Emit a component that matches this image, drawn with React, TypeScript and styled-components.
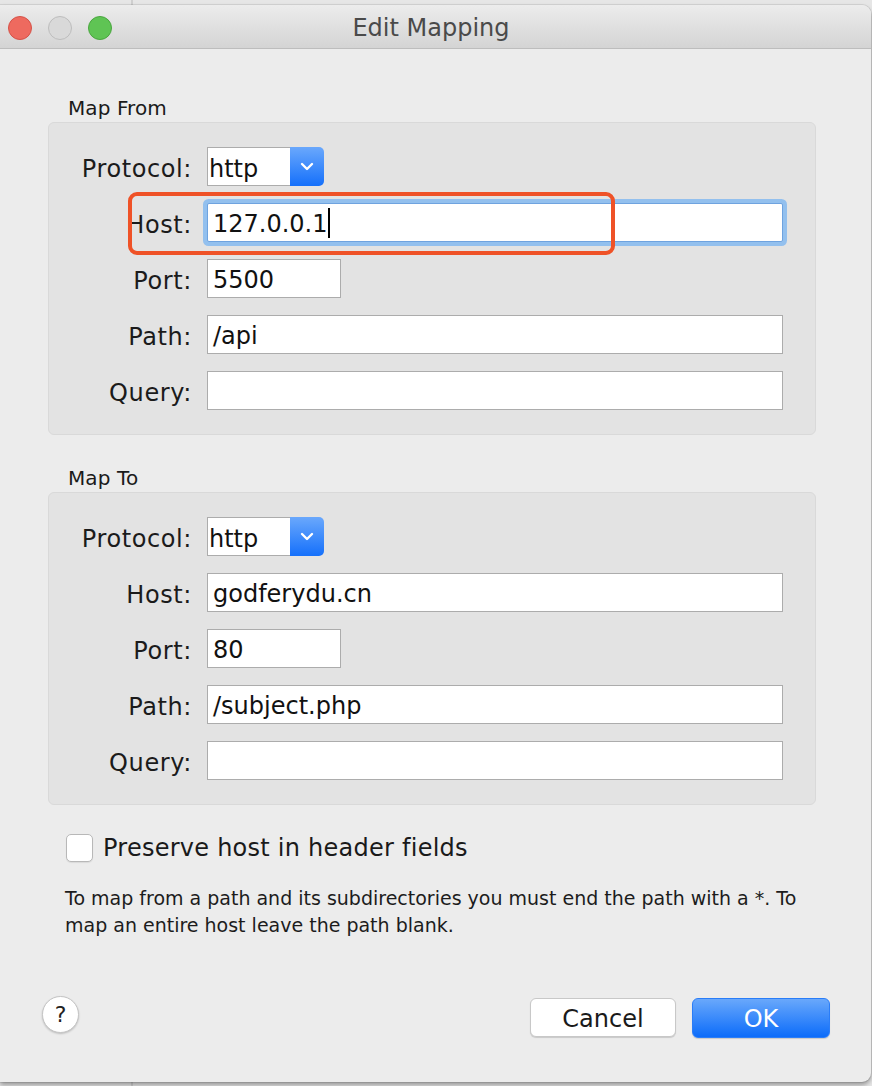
import React from "react";
import styled, { createGlobalStyle } from "styled-components";

const GlobalStyle = createGlobalStyle`
  html, body {
    margin: 0;
    padding: 0;
    background: #d6d6d6;
    font-family: "DejaVu Sans", "Liberation Sans", sans-serif;
    color: #1b1b1b;
  }
`;

const Desk = styled.div`
  width: 872px;
  height: 1086px;
  overflow: hidden;
  background: linear-gradient(90deg, #e6e6e6 0 131px, #cfcfcf 131px 133px, #e6e6e6 133px);
`;

const Window = styled.div`
  width: 871px;
  height: 1077px;
  margin-top: 5px;
  background: #ececec;
  border-radius: 0 9px 9px 0;
  box-shadow: 0 3px 5px rgba(0, 0, 0, 0.35), 0 0 0 1px rgba(0, 0, 0, 0.08);
  display: flex;
  flex-direction: column;
  overflow: hidden;
`;

const TitleBar = styled.div`
  height: 43px;
  flex-shrink: 0;
  display: grid;
  grid-template-columns: 1fr auto 1fr;
  align-items: center;
  padding-right: 9px;
  background: linear-gradient(#ececec, #d4d4d4);
  border-bottom: 1px solid #bdbdbd;
`;

const Lights = styled.div`
  display: flex;
  gap: 16px;
  padding-left: 8px;
  margin-top: 2px;
`;

const Light = styled.span<{ $color: string; $edge: string }>`
  width: 24px;
  height: 24px;
  border-radius: 50%;
  box-sizing: border-box;
  background: ${(p) => p.$color};
  border: 1px solid ${(p) => p.$edge};
`;

const Title = styled.div`
  font-size: 24px;
  color: #4a4a4a;
  margin-top: 3px;
`;

const Content = styled.div`
  padding: 47px 55px 0 48px;
  display: flex;
  flex-direction: column;
`;

const SectionLabel = styled.div<{ $gap?: number }>`
  font-size: 20px;
  line-height: 24px;
  margin: ${(p) => p.$gap ?? 0}px 0 2px 20px;
  color: #1a1a1a;
  letter-spacing: 0.1px;
`;

const Group = styled.div`
  position: relative;
  background: #e3e3e3;
  border: 1px solid #d9d9d9;
  border-radius: 6px;
  padding: 24px 32px 24px 0;
  display: grid;
  grid-template-columns: 142px 1fr;
  column-gap: 16px;
  row-gap: 17px;
  align-items: center;
`;

const Label = styled.div`
  font-size: 24px;
  text-align: right;
  color: #1b1b1b;
  letter-spacing: 0.6px;
  padding-top: 4px;
  margin-right: -1px;
`;

const Field = styled.div<{ $width?: number; $focused?: boolean }>`
  box-sizing: border-box;
  height: 39px;
  width: ${(p) => (p.$width ? `${p.$width}px` : "100%")};
  background: #fff;
  border: 1px solid ${(p) => (p.$focused ? "#6fa3df" : "#acacac")};
  border-radius: ${(p) => (p.$focused ? "2px" : "0")};
  box-shadow: ${(p) => (p.$focused ? "0 0 0 4px #93c0ee" : "none")};
  font-size: 24px;
  padding: 3px 5px 0;
  white-space: nowrap;
  display: flex;
  align-items: center;
  color: #111;
`;

const Caret = styled.span`
  width: 2px;
  height: 30px;
  background: #000;
  margin: -3px 0 0 0;
`;

const Select = styled.div`
  display: flex;
  width: 117px;
  height: 39px;
`;

const SelectValue = styled.div`
  flex: 1;
  box-sizing: border-box;
  background: #fff;
  border: 1px solid #acacac;
  border-right: none;
  font-size: 24px;
  line-height: 37px;
  padding: 3px 0 0 1px;
  color: #111;
`;

const SelectArrow = styled.div`
  width: 34px;
  border-radius: 0 5px 5px 0;
  background: linear-gradient(#6aa8fc, #1570fb);
  display: flex;
  align-items: center;
  justify-content: center;
`;

const Annotation = styled.div`
  position: absolute;
  left: 79px;
  top: 69px;
  width: 487px;
  height: 63px;
  box-sizing: border-box;
  border: 4px solid #ef5227;
  border-radius: 9px;
  pointer-events: none;
`;

const CheckRow = styled.label`
  display: flex;
  align-items: center;
  gap: 10px;
  margin: 29px 0 0 18px;
  font-size: 24px;
  line-height: 28px;
  color: #1a1a1a;
  letter-spacing: 0.25px;
`;

const CheckBox = styled.span`
  width: 27px;
  height: 28px;
  box-sizing: border-box;
  border-radius: 5px;
  background: #fff;
  border: 1px solid #b8b8b8;
  box-shadow: 0 1px 1px rgba(0, 0, 0, 0.08);
`;

const Hint = styled.p`
  margin: 23px 0 0 17px;
  font-size: 19px;
  line-height: 27px;
  color: #1c1c1c;
`;

const Footer = styled.div`
  margin-top: auto;
  padding: 0 41px 43px 42px;
  display: flex;
  align-items: center;
  gap: 16px;
`;

const Help = styled.div`
  width: 37px;
  height: 37px;
  box-sizing: border-box;
  border-radius: 50%;
  background: #fff;
  border: 1px solid #c4c4c4;
  box-shadow: 0 1px 2px rgba(0, 0, 0, 0.2);
  display: flex;
  align-items: center;
  justify-content: center;
  font-size: 22px;
  color: #222;
  margin-bottom: 6px;
  margin-right: auto;
`;

const Button = styled.button<{ $primary?: boolean }>`
  box-sizing: border-box;
  height: ${(p) => (p.$primary ? 40 : 39)}px;
  width: ${(p) => (p.$primary ? 138 : 146)}px;
  border-radius: 6px;
  font-family: "DejaVu Sans", "Liberation Sans", sans-serif;
  font-size: 24px;
  padding: 3px 0 0;
  border: 1px solid ${(p) => (p.$primary ? "#2a7df8" : "#c8c8c8")};
  background: ${(p) => (p.$primary ? "linear-gradient(#69a8fb, #0c6cfa)" : "#fff")};
  color: ${(p) => (p.$primary ? "#fff" : "#1a1a1a")};
  box-shadow: 0 1px 1px rgba(0, 0, 0, 0.15);
`;

const Chevron = () => (
  <svg width="14" height="9" viewBox="0 0 14 9">
    <path d="M2 2 L7 7 L12 2" fill="none" stroke="#fff" strokeWidth="2.4" strokeLinecap="round" strokeLinejoin="round" />
  </svg>
);

type Mapping = { protocol: string; host: string; port: string; path: string; query: string };

function MappingGroup({ data, annotated }: { data: Mapping; annotated?: boolean }) {
  return (
    <Group>
      <Label>Protocol:</Label>
      <Select>
        <SelectValue>{data.protocol}</SelectValue>
        <SelectArrow>
          <Chevron />
        </SelectArrow>
      </Select>
      <Label>Host:</Label>
      <Field $focused={annotated}>
        {data.host}
        {annotated && <Caret />}
      </Field>
      <Label>Port:</Label>
      <Field $width={134}>{data.port}</Field>
      <Label>Path:</Label>
      <Field>{data.path}</Field>
      <Label>Query:</Label>
      <Field>{data.query}</Field>
      {annotated && <Annotation />}
    </Group>
  );
}

export default function App() {
  return (
    <>
      <GlobalStyle />
      <Desk>
        <Window>
          <TitleBar>
            <Lights>
              <Light $color="#ee6a5f" $edge="#d55248" />
              <Light $color="#d9d9d9" $edge="#bdbdbd" />
              <Light $color="#5fc454" $edge="#4aa63f" />
            </Lights>
            <Title>Edit Mapping</Title>
            <span />
          </TitleBar>
          <Content>
            <SectionLabel>Map From</SectionLabel>
            <MappingGroup
              annotated
              data={{ protocol: "http", host: "127.0.0.1", port: "5500", path: "/api", query: "" }}
            />
            <SectionLabel $gap={31}>Map To</SectionLabel>
            <MappingGroup
              data={{ protocol: "http", host: "godferydu.cn", port: "80", path: "/subject.php", query: "" }}
            />
            <CheckRow>
              <CheckBox />
              Preserve host in header fields
            </CheckRow>
            <Hint>
              To map from a path and its subdirectories you must end the path with a *. To
              <br />
              map an entire host leave the path blank.
            </Hint>
          </Content>
          <Footer>
            <Help>?</Help>
            <Button>Cancel</Button>
            <Button $primary>OK</Button>
          </Footer>
        </Window>
      </Desk>
    </>
  );
}
